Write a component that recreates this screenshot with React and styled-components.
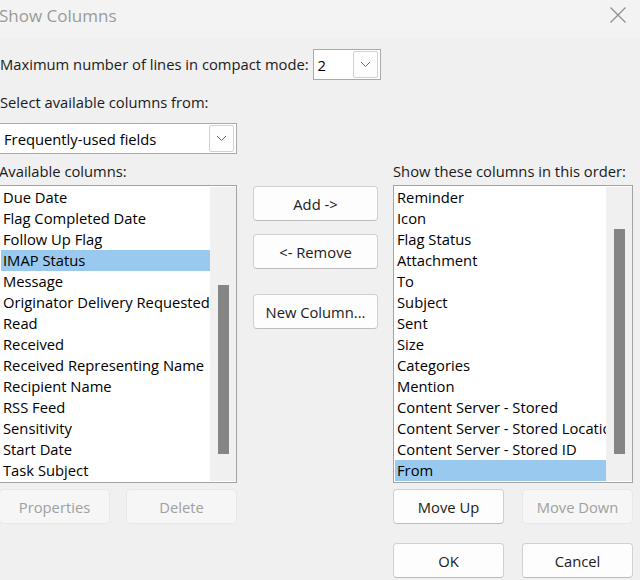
import React from 'react'
import styled, { createGlobalStyle } from 'styled-components';

const availableColumns = [
    'Due Date',
    'Flag Completed Date',
    'Follow Up Flag',
    'IMAP Status',
    'Message',
    'Originator Delivery Requested',
    'Read',
    'Received',
    'Received Representing Name',
    'Recipient Name',
    'RSS Feed',
    'Sensitivity',
    'Start Date',
    'Task Subject',
];

const shownColumns = [
    'Reminder',
    'Icon',
    'Flag Status',
    'Attachment',
    'To',
    'Subject',
    'Sent',
    'Size',
    'Categories',
    'Mention',
    'Content Server - Stored',
    'Content Server - Stored Location',
    'Content Server - Stored ID',
    'From',
];

const GlobalStyle = createGlobalStyle`
    html, body {
        margin: 0;
        padding: 0;
        background: #f0f0f0;
        overflow: hidden;
    }
    body {
        font-family: "Open Sans", "Noto Sans", sans-serif;
        font-size: 14.75px;
        color: #000;
    }
`;

function Chevron() {
    return (
        <svg width="11" height="7" viewBox="0 0 11 7">
            <path d="M1 1 L5.5 5.5 L10 1" fill="none" stroke="#6a6a6a" strokeWidth="1" />
        </svg>
    )
}

function ComboBox({ value, width }) {
    return (
        <Combo $width={width}>
            <ComboValue>{value}</ComboValue>
            <ComboButton><Chevron /></ComboButton>
        </Combo>
    )
}

function ListBox({ items, selected, thumbTop, thumbHeight }) {
    return (
        <List>
            <Items>
                {items.map((item, index) => (
                    <Item key={index} $selected={index === selected}>{item}</Item>
                ))}
            </Items>
            <Track>
                <Thumb $top={thumbTop} $height={thumbHeight} />
            </Track>
        </List>
    )
}

export default function App() {
    return (
        <>
            <GlobalStyle />
            <Dialog>
                <TitleBar>
                    <Title>Show Columns</Title>
                    <Close>
                        <svg width="16" height="16" viewBox="0 0 16 16">
                            <path d="M0.5 0.5 L15.5 15.5 M15.5 0.5 L0.5 15.5" stroke="#8c8c8c" strokeWidth="1.2" />
                        </svg>
                    </Close>
                </TitleBar>
                <Body>
                    <LinesRow>
                        <Label>Maximum number of lines in compact mode:</Label>
                        <ComboBox value="2" width={68} />
                    </LinesRow>
                    <SourceLabel>Select available columns from:</SourceLabel>
                    <ComboBox value="Frequently-used fields" width={238} />
                    <Columns>
                        <Column>
                            <Label>Available columns:</Label>
                            <ListBox items={availableColumns} selected={3} thumbTop={98} thumbHeight={169} />
                            <ButtonRow>
                                <Button disabled>Properties</Button>
                                <Button disabled>Delete</Button>
                            </ButtonRow>
                        </Column>
                        <Middle>
                            <Button $gap={25}>Add -&gt;</Button>
                            <Button $gap={13}>&lt;- Remove</Button>
                            <Button $gap={25}>New Column...</Button>
                        </Middle>
                        <RightColumn>
                            <Label>Show these columns in this order:</Label>
                            <ListBox items={shownColumns} selected={13} thumbTop={42} thumbHeight={225} />
                            <ButtonRow>
                                <Button>Move Up</Button>
                                <Button disabled>Move Down</Button>
                            </ButtonRow>
                            <ButtonRow $gap={19}>
                                <Button>OK</Button>
                                <Button>Cancel</Button>
                            </ButtonRow>
                        </RightColumn>
                    </Columns>
                </Body>
            </Dialog>
        </>
    )
}

const Dialog = styled.div`
    width: 640px;
    height: 580px;
    background: #f0f0f0;
    overflow: hidden;
`;

const TitleBar = styled.div`
    height: 38px;
    display: flex;
    align-items: center;
    justify-content: space-between;
    background: #f3f3f3;
    padding-right: 14px;
`;

const Title = styled.div`
    font-size: 17px;
    color: #9a9a9a;
    margin-top: -7px;
    margin-left: -1px;
`;

const Close = styled.div`
    display: flex;
    margin-top: -8px;
`;

const Body = styled.div`
    display: flex;
    flex-direction: column;
    align-items: flex-start;
    margin-left: -1px;
`;

const LinesRow = styled.div`
    display: flex;
    align-items: center;
    gap: 4px;
    margin-top: 11px;
    margin-left: 1px;
`;

const Label = styled.div`
    line-height: 21px;
    white-space: nowrap;
    color: #1a1a1a;
`;

const SourceLabel = styled(Label)`
    margin: 12px 0 10px 1px;
`;

const Combo = styled.div`
    width: ${p => p.$width}px;
    height: 31px;
    box-sizing: border-box;
    border: 1px solid #a9a9a9;
    background: #fff;
    display: flex;
    align-items: center;
    justify-content: space-between;
    padding: 0 2px 0 4px;
`;

const ComboValue = styled.div`
    white-space: nowrap;
`;

const ComboButton = styled.div`
    width: 25px;
    height: 27px;
    box-sizing: border-box;
    border: 1px solid #d2d2d2;
    border-radius: 2px;
    background: #fdfdfd;
    display: flex;
    align-items: center;
    justify-content: center;
`;

const Columns = styled.div`
    display: grid;
    grid-template-columns: 238px 125px 239px;
    column-gap: 16px;
    margin-top: 7px;
`;

const Column = styled.div`
    display: flex;
    flex-direction: column;
`;

const RightColumn = styled(Column)`
    margin-left: -1px;
`;

const Middle = styled.div`
    display: flex;
    flex-direction: column;
`;

const List = styled.div`
    margin-top: 3px;
    height: 298px;
    box-sizing: border-box;
    border: 1px solid #a3a3a3;
    padding: 1px 0 1px 1px;
    background: #fff;
    display: flex;
`;

const Items = styled.div`
    flex: 1;
    min-width: 0;
    overflow: hidden;
`;

const Item = styled.div`
    height: 21px;
    line-height: 21px;
    padding-left: 2px;
    white-space: nowrap;
    overflow: hidden;
    background: ${p => p.$selected ? '#99c9ef' : 'transparent'};
`;

const Track = styled.div`
    width: 26px;
    background: #f0f0f0;
    display: flex;
    flex-direction: column;
    align-items: center;
`;

const Thumb = styled.div`
    width: 11px;
    margin-top: ${p => p.$top}px;
    height: ${p => p.$height}px;
    background: #858585;
`;

const ButtonRow = styled.div`
    display: flex;
    justify-content: space-between;
    margin-top: ${p => p.$gap || 6}px;
`;

const Button = styled.button`
    width: 111px;
    height: 35px;
    margin: ${p => p.$gap || 0}px 0 0 0;
    box-sizing: border-box;
    border: 1px solid ${p => p.disabled ? '#e8e8e8' : '#d0d0d0'};
    border-bottom-color: ${p => p.disabled ? '#e8e8e8' : '#bdbdbd'};
    border-radius: 4px;
    background: ${p => p.disabled ? '#f6f6f6' : '#fdfdfd'};
    color: ${p => p.disabled ? '#a0a0a0' : '#1a1a1a'};
    font-family: inherit;
    font-size: 14.75px;
    padding: 0;
    ${Middle} & {
        width: 125px;
    }
`;
